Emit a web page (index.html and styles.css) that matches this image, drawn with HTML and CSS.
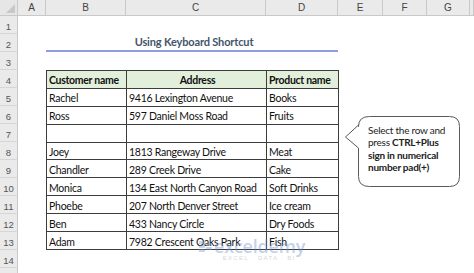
FILE: index.html
```html
<!DOCTYPE html>
<html>
<head>
<meta charset="utf-8">
<link rel="stylesheet" href="styles.css">
</head>
<body>
<div class="sheet">
  <div class="corner"><svg width="10" height="10" viewBox="0 0 10 10"><polygon points="10,1 10,10 1,10" fill="#c8c8c8"/></svg></div>
  <div class="colhead">A</div>
  <div class="colhead">B</div>
  <div class="colhead">C</div>
  <div class="colhead">D</div>
  <div class="colhead">E</div>
  <div class="colhead">F</div>
  <div class="colhead">G</div>
  <div class="colhead"></div>

  <div class="rowhead r1">1</div>
  <div class="rowhead r2">2</div>
  <div class="rowhead r3">3</div>
  <div class="rowhead r4">4</div>
  <div class="rowhead r5">5</div>
  <div class="rowhead r6">6</div>
  <div class="rowhead r7">7</div>
  <div class="rowhead r8">8</div>
  <div class="rowhead r9">9</div>
  <div class="rowhead r10">10</div>
  <div class="rowhead r11">11</div>
  <div class="rowhead r12">12</div>
  <div class="rowhead r13">13</div>
  <div class="rowhead r14">14</div>
  <div class="rowhead r15"></div>

  <div class="title">Using Keyboard Shortcut</div>

  <table class="data">
    <tr class="head"><th class="cb">Customer name</th><th class="cc">Address</th><th class="cd">Product name</th></tr>
    <tr><td>Rachel</td><td>9416 Lexington Avenue</td><td>Books</td></tr>
    <tr><td>Ross</td><td>597 Daniel Moss Road</td><td>Fruits</td></tr>
    <tr><td></td><td></td><td></td></tr>
    <tr><td>Joey</td><td>1813 Rangeway Drive</td><td>Meat</td></tr>
    <tr><td>Chandler</td><td>289 Creek Drive</td><td>Cake</td></tr>
    <tr><td>Monica</td><td>134 East North Canyon Road</td><td>Soft Drinks</td></tr>
    <tr><td>Phoebe</td><td>207 North Denver Street</td><td>Ice cream</td></tr>
    <tr><td>Ben</td><td>433 Nancy Circle</td><td>Dry Foods</td></tr>
    <tr><td>Adam</td><td>7982 Crescent Oaks Park</td><td>Fish</td></tr>
  </table>
</div>

<div class="callout">
  <svg class="bubble" width="120" height="76" viewBox="0 0 120 76">
    <path d="M25.5 0.5 H105.5 Q115.5 0.5 115.5 10.5 V60.5 Q115.5 70.5 105.5 70.5 H25.5 Q14.5 70.5 14.5 60.5 V32 L1.5 21 L14.5 9 V10.5 Q14.5 0.5 25.5 0.5 Z" fill="#ffffff" stroke="#5a5a5a" stroke-width="1"/>
  </svg>
  <div class="callout-text">Select the row and<br>press <b>CTRL+Plus</b><br><b>sign in numerical</b><br><b>number pad(+)</b></div>
</div>

<div class="watermark">
  <div class="wm-row">
    <svg width="13" height="12" viewBox="0 0 13 12"><rect x="0" y="1" width="6" height="3" fill="#7d9bd0"/><rect x="0" y="5" width="6" height="3" fill="#7d9bd0"/><rect x="0" y="9" width="6" height="3" fill="#7d9bd0"/><rect x="7" y="3" width="6" height="3" fill="#7d9bd0"/><rect x="7" y="7" width="6" height="3" fill="#7d9bd0"/></svg>
    <span class="wm-name">exceldemy</span>
  </div>
  <div class="wm-sub">EXCEL · DATA · BI</div>
</div>
</body>
</html>
```
FILE: styles.css
```css
html, body {
  margin: 0;
  padding: 0;
  background: #ffffff;
  overflow: hidden;
}
body {
  width: 474px;
  height: 273px;
  position: relative;
  font-family: Lato, "Open Sans", "Liberation Sans", sans-serif;
}
.sheet {
  display: grid;
  grid-template-columns: 18px 28px 80px 140px 72px 45px 44px 43px 1fr;
  grid-template-rows: 16px repeat(15, 18px);
  width: 474px;
}
.corner {
  background: #e6e6e6;
  border-right: 1px solid #c9c9c9;
  border-bottom: 1px solid #c9c9c9;
  display: flex;
  align-items: flex-end;
  justify-content: flex-end;
  padding: 0 2px 2px 0;
  box-sizing: border-box;
}
.colhead {
  background: #eaeaea;
  border-right: 1px solid #c9c9c9;
  border-bottom: 1px solid #c9c9c9;
  box-sizing: border-box;
  font-family: "Liberation Sans", Arial, sans-serif;
  font-size: 10px;
  color: #444;
  display: flex;
  align-items: center;
  justify-content: center;
}
.rowhead {
  grid-column: 1;
  background: #eaeaea;
  border-right: 1px solid #c9c9c9;
  border-bottom: 1px solid #d6d6d6;
  box-sizing: border-box;
  font-family: "Liberation Sans", Arial, sans-serif;
  font-size: 9.5px;
  color: #555;
  display: flex;
  align-items: center;
  justify-content: center;
  padding-top: 3px;
}
.r1 { grid-row: 2; } .r2 { grid-row: 3; } .r3 { grid-row: 4; } .r4 { grid-row: 5; }
.r5 { grid-row: 6; } .r6 { grid-row: 7; } .r7 { grid-row: 8; } .r8 { grid-row: 9; }
.r9 { grid-row: 10; } .r10 { grid-row: 11; } .r11 { grid-row: 12; } .r12 { grid-row: 13; }
.r13 { grid-row: 14; } .r14 { grid-row: 15; } .r15 { grid-row: 16; }

.title {
  grid-column: 3 / 6;
  grid-row: 3;
  border-bottom: 2px solid #8e9fe0;
  box-sizing: border-box;
  font-size: 11px;
  letter-spacing: -0.15px;
  font-weight: bold;
  color: #44546a;
  text-align: center;
  line-height: 16px;
  padding-left: 4px;
}
.data {
  grid-column: 3 / 6;
  grid-row: 5 / 15;
  border-collapse: collapse;
  table-layout: fixed;
  width: 292px;
  font-size: 10.5px;
  letter-spacing: -0.25px;
  color: #111;
  margin: 0;
}
.data td, .data th {
  border: 1px solid #3c3c3c;
  height: 17px;
  padding: 2px 0 0 2px;
  line-height: 14px;
  box-sizing: border-box;
  white-space: nowrap;
  overflow: hidden;
  text-align: left;
}
.data th {
  background: #e2efda;
  font-weight: bold;
  padding-left: 2px;
  letter-spacing: -0.3px;
}
.data th.cc { text-align: center; }
.cb { width: 80px; }
.cc { width: 140px; }
.cd { width: 72px; }

.callout {
  position: absolute;
  left: 344px;
  top: 116px;
  width: 120px;
  height: 76px;
}
.bubble { display: block; }
.callout-text {
  position: absolute;
  left: 24px;
  top: 8px;
  font-size: 10px;
  letter-spacing: -0.25px;
  line-height: 12.3px;
  color: #222;
  white-space: nowrap;
}
.callout-text b { font-weight: bold; }

.watermark {
  position: absolute;
  left: 199px;
  top: 237px;
  opacity: 0.4;
  display: flex;
  flex-direction: column;
  align-items: center;
}
.wm-row {
  display: flex;
  align-items: center;
  gap: 2px;
}
.wm-name {
  font-family: "Open Sans", sans-serif;
  font-size: 18px;
  font-weight: 600;
  color: #6f8fcb;
  line-height: 18px;
  letter-spacing: -0.2px;
}
.wm-sub {
  font-family: "Liberation Sans", sans-serif;
  font-size: 6px;
  letter-spacing: 1.3px;
  color: #999;
  margin-top: 0;
  padding-left: 14px;
}
```
